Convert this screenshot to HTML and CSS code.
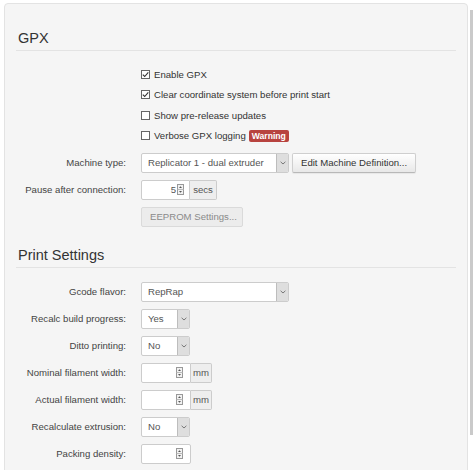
FILE: index.html
```html
<!DOCTYPE html>
<html>
<head>
<meta charset="utf-8">
<link rel="stylesheet" href="styles.css">
</head>
<body>
<div class="page">
  <div class="panel">
    <section class="section section-gpx">
      <h3 class="section-title">GPX</h3>
      <div class="form">
        <div class="label"></div>
        <div class="checks">
          <div class="check"><span class="box"><svg viewBox="0 0 9 9" width="9" height="9"><path d="M1.8 4.6 L3.7 6.5 L7.3 2.4" fill="none" stroke="#333" stroke-width="1.1"/></svg></span>Enable GPX</div>
          <div class="check"><span class="box"><svg viewBox="0 0 9 9" width="9" height="9"><path d="M1.8 4.6 L3.7 6.5 L7.3 2.4" fill="none" stroke="#333" stroke-width="1.1"/></svg></span>Clear coordinate system before print start</div>
          <div class="check"><span class="box"></span>Show pre-release updates</div>
          <div class="check"><span class="box"></span>Verbose GPX logging <span class="badge">Warning</span></div>
        </div>

        <div class="label">Machine type:</div>
        <div class="controls">
          <div class="select select-wide"><span class="select-text">Replicator 1 - dual extruder</span><span class="caret"><svg viewBox="0 0 6 4" width="6" height="4"><path d="M0.6 0.8 L3 3 L5.4 0.8" fill="none" stroke="#777" stroke-width="1"/></svg></span></div>
          <button class="btn">Edit Machine Definition...</button>
        </div>

        <div class="label">Pause after connection:</div>
        <div class="controls">
          <div class="input-group">
            <div class="num num-pause"><span class="num-value">5</span><span class="spin"><svg viewBox="0 0 7 11" width="7" height="11"><rect x="0.5" y="0.5" width="6" height="10" fill="#f2f2f2" stroke="#999"/><line x1="0.5" y1="5.5" x2="6.5" y2="5.5" stroke="#bbb"/><path d="M2 4 L3.5 2.2 L5 4 Z" fill="#555"/><path d="M2 7 L3.5 8.8 L5 7 Z" fill="#555"/></svg></span></div>
            <span class="addon addon-secs">secs</span>
          </div>
        </div>

        <div class="label"></div>
        <div class="controls">
          <button class="btn btn-disabled">EEPROM Settings...</button>
        </div>
      </div>
    </section>

    <section class="section section-print">
      <h3 class="section-title">Print Settings</h3>
      <div class="form">
        <div class="label">Gcode flavor:</div>
        <div class="controls">
          <div class="select select-wide"><span class="select-text">RepRap</span><span class="caret"><svg viewBox="0 0 6 4" width="6" height="4"><path d="M0.6 0.8 L3 3 L5.4 0.8" fill="none" stroke="#777" stroke-width="1"/></svg></span></div>
        </div>

        <div class="label">Recalc build progress:</div>
        <div class="controls">
          <div class="select select-small"><span class="select-text">Yes</span><span class="caret"><svg viewBox="0 0 6 4" width="6" height="4"><path d="M0.6 0.8 L3 3 L5.4 0.8" fill="none" stroke="#777" stroke-width="1"/></svg></span></div>
        </div>

        <div class="label">Ditto printing:</div>
        <div class="controls">
          <div class="select select-small"><span class="select-text">No</span><span class="caret"><svg viewBox="0 0 6 4" width="6" height="4"><path d="M0.6 0.8 L3 3 L5.4 0.8" fill="none" stroke="#777" stroke-width="1"/></svg></span></div>
        </div>

        <div class="label">Nominal filament width:</div>
        <div class="controls">
          <div class="input-group">
            <div class="num"><span class="spin"><svg viewBox="0 0 7 11" width="7" height="11"><rect x="0.5" y="0.5" width="6" height="10" fill="#f2f2f2" stroke="#999"/><line x1="0.5" y1="5.5" x2="6.5" y2="5.5" stroke="#bbb"/><path d="M2 4 L3.5 2.2 L5 4 Z" fill="#555"/><path d="M2 7 L3.5 8.8 L5 7 Z" fill="#555"/></svg></span></div>
            <span class="addon addon-mm">mm</span>
          </div>
        </div>

        <div class="label">Actual filament width:</div>
        <div class="controls">
          <div class="input-group">
            <div class="num"><span class="spin"><svg viewBox="0 0 7 11" width="7" height="11"><rect x="0.5" y="0.5" width="6" height="10" fill="#f2f2f2" stroke="#999"/><line x1="0.5" y1="5.5" x2="6.5" y2="5.5" stroke="#bbb"/><path d="M2 4 L3.5 2.2 L5 4 Z" fill="#555"/><path d="M2 7 L3.5 8.8 L5 7 Z" fill="#555"/></svg></span></div>
            <span class="addon addon-mm">mm</span>
          </div>
        </div>

        <div class="label">Recalculate extrusion:</div>
        <div class="controls">
          <div class="select select-small"><span class="select-text">No</span><span class="caret"><svg viewBox="0 0 6 4" width="6" height="4"><path d="M0.6 0.8 L3 3 L5.4 0.8" fill="none" stroke="#777" stroke-width="1"/></svg></span></div>
        </div>

        <div class="label">Packing density:</div>
        <div class="controls">
          <div class="num num-alone"><span class="spin"><svg viewBox="0 0 7 11" width="7" height="11"><rect x="0.5" y="0.5" width="6" height="10" fill="#f2f2f2" stroke="#999"/><line x1="0.5" y1="5.5" x2="6.5" y2="5.5" stroke="#bbb"/><path d="M2 4 L3.5 2.2 L5 4 Z" fill="#555"/><path d="M2 7 L3.5 8.8 L5 7 Z" fill="#555"/></svg></span></div>
        </div>
      </div>
    </section>
  </div>
  <div class="scrollbar"></div>
</div>
</body>
</html>
```

FILE: styles.css
```css
html, body {
  margin: 0;
  padding: 0;
  background: #ffffff;
  overflow: hidden;
}

body {
  font-family: "Liberation Sans", Arial, sans-serif;
  font-size: 9.6px;
  color: #333333;
  width: 474px;
  height: 470px;
}

.page {
  display: flex;
  align-items: flex-start;
}

.panel {
  margin: 3px 0 0 4px;
  width: 440px;
  padding: 0 11px 40px 11px;
  background: #f5f5f5;
  border: 1px solid #e3e3e3;
  border-radius: 4px;
}

.scrollbar {
  width: 3px;
  height: 425px;
  margin: 10px 0 0 2px;
  background: #cacaca;
}

.section-title {
  margin: 0;
  font-size: 14.5px;
  font-weight: normal;
  line-height: 18px;
  padding: 0 0 3px 2px;
  border-bottom: 1px solid #e3e3e3;
  color: #333333;
}

.section-gpx .section-title {
  margin-top: 25px;
}

.section-print .section-title {
  margin-top: 19px;
}

.form {
  display: grid;
  grid-template-columns: 110px 1fr;
  column-gap: 15px;
  row-gap: 7px;
  align-items: center;
  margin-top: 14px;
}

.section-gpx .form {
  margin-top: 13.5px;
}

.label {
  text-align: right;
  color: #444444;
  white-space: nowrap;
}

.checks {
  display: flex;
  flex-direction: column;
}

.check {
  display: flex;
  align-items: center;
  height: 20.3px;
  white-space: nowrap;
  color: #333333;
}

.box {
  box-sizing: border-box;
  width: 9px;
  height: 9px;
  border: 1px solid #666666;
  background: #ffffff;
  margin-right: 4px;
  display: flex;
  align-items: center;
  justify-content: center;
  overflow: hidden;
}

.box svg {
  flex: none;
  display: block;
}

.badge {
  display: inline-block;
  margin-left: 3px;
  height: 12px;
  line-height: 12px;
  padding: 0 3px;
  background: #b8433f;
  color: #ffffff;
  font-weight: bold;
  font-size: 8.6px;
  border-radius: 2px;
}

.controls {
  display: flex;
  align-items: center;
  height: 20px;
}

.select {
  box-sizing: border-box;
  height: 20px;
  display: flex;
  background: #ffffff;
  border: 1px solid #cccccc;
  border-radius: 2px;
  overflow: hidden;
  color: #555555;
}

.select-wide {
  width: 148px;
}

.select-small {
  width: 49px;
}

.select-text {
  flex: 1;
  padding-left: 6px;
  line-height: 18px;
  white-space: nowrap;
}

.caret {
  width: 11px;
  background: #dedede;
  border-left: 1px solid #bdbdbd;
  display: flex;
  align-items: center;
  justify-content: center;
}

.caret svg {
  display: block;
}

.btn {
  box-sizing: border-box;
  height: 20px;
  margin: 0 0 0 3px;
  padding: 0 8px;
  font-family: inherit;
  font-size: 9.6px;
  color: #333333;
  background: linear-gradient(#ffffff, #e8e8e8);
  border: 1px solid #cfcfcf;
  border-bottom-color: #b8b8b8;
  border-radius: 2px;
  box-shadow: 0 1px 1px rgba(0, 0, 0, 0.06);
  white-space: nowrap;
}

.btn-disabled {
  margin-left: 0;
  width: 102px;
  text-align: left;
  color: #8a8a8a;
  background: #ececec;
  border-color: #dadada;
  box-shadow: none;
}

.input-group {
  display: flex;
  height: 20px;
}

.num {
  box-sizing: border-box;
  width: 50px;
  height: 20px;
  display: flex;
  align-items: center;
  justify-content: flex-end;
  padding-right: 7px;
  background: #ffffff;
  border: 1px solid #cccccc;
  border-radius: 2px 0 0 2px;
  color: #555555;
}

.num-pause {
  width: 49px;
  padding-right: 5px;
}

.num-alone {
  border-radius: 2px;
}

.num-value {
  line-height: 18px;
  margin-right: 1px;
}

.spin svg {
  display: block;
}

.addon {
  box-sizing: border-box;
  height: 20px;
  line-height: 18px;
  background: #eeeeee;
  border: 1px solid #cccccc;
  border-left: none;
  border-radius: 0 2px 2px 0;
  color: #555555;
  text-align: center;
}

.addon-secs {
  width: 27px;
}

.addon-mm {
  width: 21px;
}
```
